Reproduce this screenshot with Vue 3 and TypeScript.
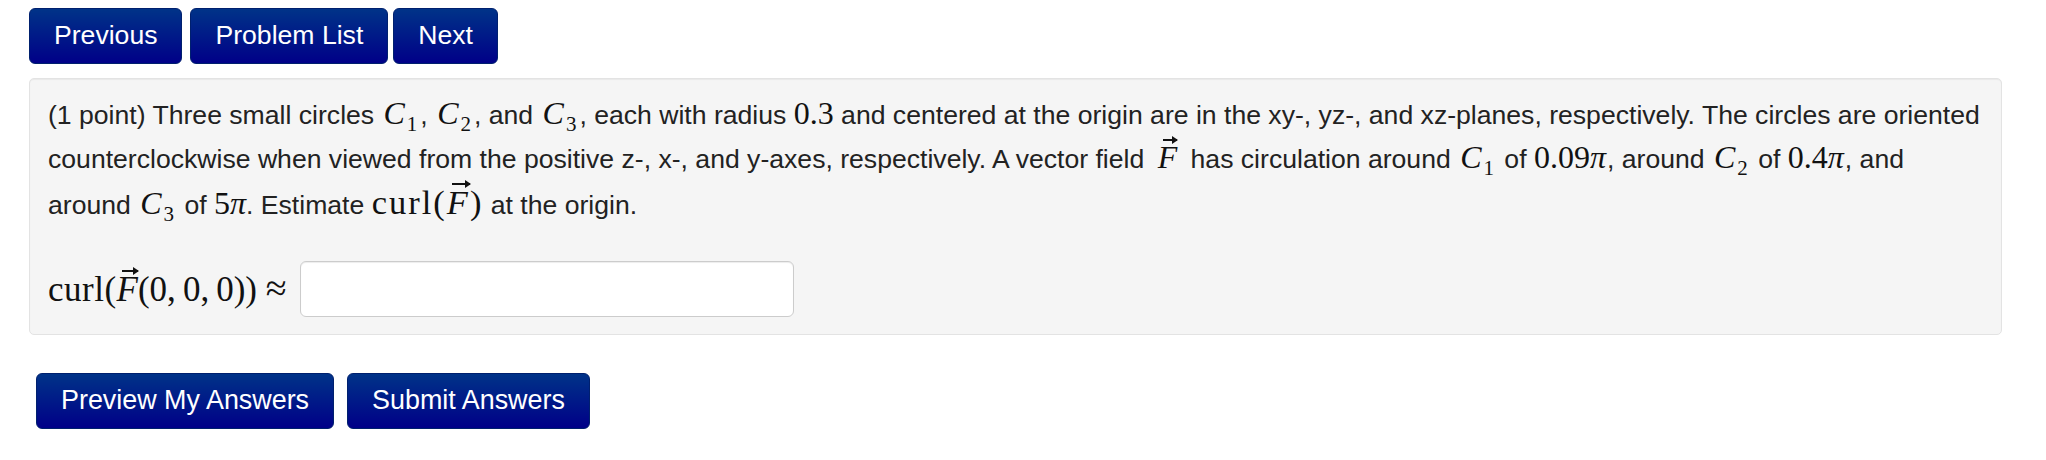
<script setup lang="ts">
const navButtons: string[] = ['Previous', 'Problem List', 'Next']
</script>

<template>
  <div class="page">
    <nav class="nav">
      <button v-for="b in navButtons" :key="b" class="btn" type="button">{{ b }}</button>
    </nav>
    <section class="well">
      <div class="problem">
        <p class="line">(1 point) Three small circles <span class="m c"><i>C</i><sub>1</sub></span>, <span class="m c"><i>C</i><sub>2</sub></span>, and <span class="m c"><i>C</i><sub>3</sub></span>, each with radius <span class="m">0.3</span> and centered at the origin are in the xy-, yz-, and xz-planes, respectively. The circles are oriented</p>
        <p class="line">counterclockwise when viewed from the positive z-, x-, and y-axes, respectively. A vector field <span class="m f"><span class="vec"><i>F</i></span></span> has circulation around <span class="m c"><i>C</i><sub>1</sub></span> of <span class="m pi">0.09<i>π</i></span>, around <span class="m c"><i>C</i><sub>2</sub></span> of <span class="m pi">0.4<i>π</i></span>, and</p>
        <p class="line last">around <span class="m c"><i>C</i><sub>3</sub></span> of <span class="m">5<i>π</i></span>. Estimate <span class="m curl">curl(<span class="vec"><i>F</i></span>)</span> at the origin.</p>
      </div>
      <div class="answer">
        <span class="m big"><span class="wide">curl(</span><span class="vec"><i>F</i></span>(0,&#8201;0,&#8201;0)) <span class="approx">≈</span></span>
        <input class="field" type="text" aria-label="answer" />
      </div>
    </section>
    <div class="actions">
      <button class="btn" type="button">Preview My Answers</button>
      <button class="btn" type="button">Submit Answers</button>
    </div>
  </div>
</template>

<style scoped>
.page {
  width: 2046px;
  height: 460px;
  box-sizing: border-box;
  padding: 8px 44px 0 29px;
  font-family: "Liberation Sans", Arial, sans-serif;
  color: #222;
  background: #fff;
  overflow: hidden;
}
.nav {
  display: flex;
  gap: 5px;
}
.nav .btn:first-child {
  margin-right: 3px;
}
.btn {
  height: 56px;
  padding: 0 24px 2px;
  border: 1px solid #00206e;
  border-radius: 6px;
  background: linear-gradient(#003388, #000088);
  color: #fff;
  font: 26.6px "Liberation Sans", Arial, sans-serif;
}
.well {
  margin-top: 14px;
  height: 257px;
  box-sizing: border-box;
  padding: 14px 18px 0;
  background: #f5f5f5;
  border: 1px solid #e3e3e3;
  border-radius: 5px;
  box-shadow: inset 0 1px 1px rgba(0, 0, 0, 0.05);
}
.problem {
  font-size: 26.6px;
  line-height: 44px;
}
.line {
  margin: 0;
  white-space: nowrap;
}
.last {
  margin-top: 2px;
}
.m {
  font-family: "Liberation Serif", "Times New Roman", serif;
  font-size: 32px;
  line-height: 1;
  color: #111;
}
.c {
  margin-left: 2px;
}
.c sub {
  margin-left: 2px;
  margin-right: 3px;
}
.f {
  margin: 0 6px 0 6px;
}
.pi {
  margin-right: 1px;
}
.curl {
  font-size: 34.5px;
  letter-spacing: 2px;
}
.big {
  font-size: 35px;
  white-space: nowrap;
}
.wide {
  letter-spacing: 0.5px;
}
.approx {
  font-size: 38px;
  line-height: 0;
}
.m sub {
  font-size: 21px;
  line-height: 0;
}
.vec {
  position: relative;
  display: inline-block;
  line-height: 1;
}
.vec::before {
  content: "";
  position: absolute;
  left: 5px;
  right: 0;
  top: -2px;
  height: 2px;
  background: #111;
}
.vec::after {
  content: "";
  position: absolute;
  right: -1px;
  top: -5px;
  border-left: 6px solid #111;
  border-top: 4px solid transparent;
  border-bottom: 4px solid transparent;
}
.answer {
  margin-top: 34px;
  display: flex;
  align-items: center;
  gap: 13px;
}
.field {
  width: 494px;
  height: 56px;
  box-sizing: border-box;
  background: #fff;
  border: 1px solid #cccccc;
  border-radius: 6px;
  box-shadow: inset 0 1px 1px rgba(0, 0, 0, 0.075);
}
.actions {
  margin: 38px 0 0 7px;
  display: flex;
  gap: 13px;
}
.actions .btn {
  font-size: 26.9px;
}
</style>
